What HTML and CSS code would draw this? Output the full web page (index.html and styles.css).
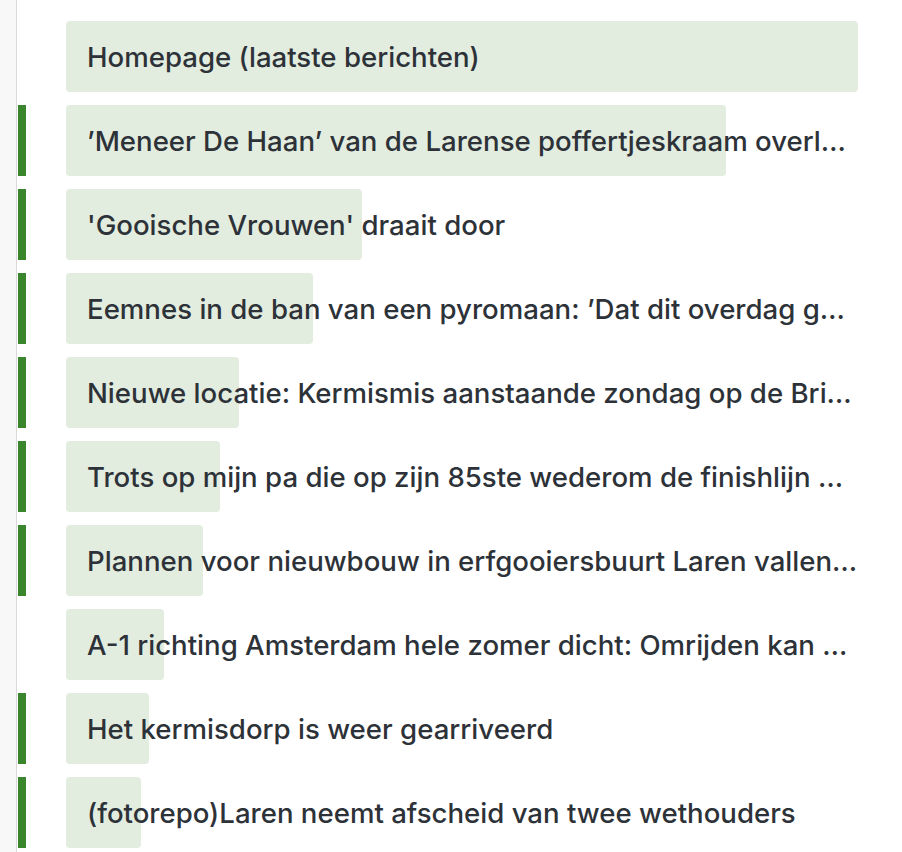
FILE: index.html
```html
<!DOCTYPE html>
<html lang="nl">
<head>
<meta charset="utf-8">
<title>Berichten</title>
<link rel="stylesheet" href="styles.css">
</head>
<body>
<div class="page">
  <aside class="rail"></aside>
  <main class="list">
    <div class="row">
      <span class="marker off"></span>
      <a class="item"><span class="fill" style="width:100%"></span><span class="label">Homepage (laatste berichten)</span></a>
    </div>
    <div class="row">
      <span class="marker"></span>
      <a class="item"><span class="fill" style="width:660px"></span><span class="label">’Meneer De Haan’ van de Larense poffertjeskraam overleden</span></a>
    </div>
    <div class="row">
      <span class="marker"></span>
      <a class="item"><span class="fill" style="width:296px"></span><span class="label">'Gooische Vrouwen' draait door</span></a>
    </div>
    <div class="row">
      <span class="marker"></span>
      <a class="item"><span class="fill" style="width:247px"></span><span class="label">Eemnes in de ban van een pyromaan: ’Dat dit overdag gebeurt is ongehoord’</span></a>
    </div>
    <div class="row">
      <span class="marker"></span>
      <a class="item"><span class="fill" style="width:173px"></span><span class="label">Nieuwe locatie: Kermismis aanstaande zondag op de Brink in Laren</span></a>
    </div>
    <div class="row">
      <span class="marker"></span>
      <a class="item"><span class="fill" style="width:154px"></span><span class="label">Trots op mijn pa die op zijn 85ste wederom de finishlijn haalde</span></a>
    </div>
    <div class="row">
      <span class="marker"></span>
      <a class="item"><span class="fill" style="width:137px"></span><span class="label">Plannen voor nieuwbouw in erfgooiersbuurt Laren vallen slecht</span></a>
    </div>
    <div class="row">
      <span class="marker off"></span>
      <a class="item"><span class="fill" style="width:98px"></span><span class="label">A-1 richting Amsterdam hele zomer dicht: Omrijden kan via Laren</span></a>
    </div>
    <div class="row">
      <span class="marker"></span>
      <a class="item"><span class="fill" style="width:83px"></span><span class="label">Het kermisdorp is weer gearriveerd</span></a>
    </div>
    <div class="row">
      <span class="marker"></span>
      <a class="item"><span class="fill" style="width:75px"></span><span class="label">(fotorepo)Laren neemt afscheid van twee wethouders</span></a>
    </div>
  </main>
</div>
</body>
</html>
```
FILE: styles.css
```css
html, body {
  margin: 0;
  padding: 0;
  background: #ffffff;
}

.page {
  display: flex;
  min-height: 100vh;
  font-family: Inter, "Noto Sans", "Liberation Sans", sans-serif;
}

.rail {
  width: 16px;
  flex: 0 0 16px;
  background: #f8f8f8;
  border-right: 1px solid #d9d9d9;
}

.list {
  display: flex;
  flex-direction: column;
  gap: 13px;
  padding-top: 21px;
}

.row {
  display: flex;
  align-items: stretch;
  height: 71px;
}

.marker {
  width: 8px;
  margin-left: 1px;
  margin-right: 40px;
  background: #3b862c;
}

.marker.off {
  background: transparent;
}

.item {
  display: grid;
  width: 792px;
  color: #2d3238;
  text-decoration: none;
}

.fill,
.label {
  grid-area: 1 / 1;
}

.fill {
  background: #e2ecdf;
  border-radius: 4px;
}

.label {
  align-self: center;
  padding: 0 0 0 21px;
  font-size: 27.6px;
  font-weight: 500;
  line-height: 36px;
  white-space: nowrap;
  overflow: hidden;
  text-overflow: ellipsis;
  min-width: 0;
}
```
